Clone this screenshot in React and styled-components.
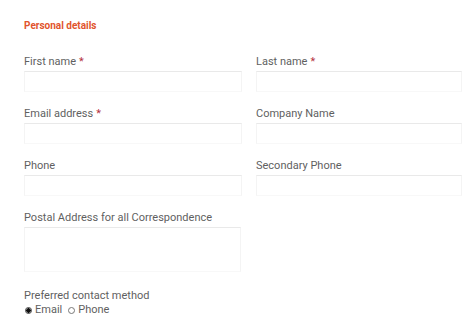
import React from "react";
import styled, { createGlobalStyle } from "styled-components";

const Global = createGlobalStyle`
  html, body { margin: 0; padding: 0; background: #fff; }
  body { font-family: Roboto, "Liberation Sans", Arial, sans-serif; }
  * { box-sizing: border-box; }
`;

const Form = styled.form`
  padding: 19px 12px 0 24px;
  width: 474px;
`;

const Title = styled.h2`
  margin: 0 0 21px;
  font-size: 10px;
  line-height: 14px;
  font-weight: 700;
  color: #e1542d;
`;

const Grid = styled.div`
  display: grid;
  grid-template-columns: 218px 206px;
  column-gap: 14px;
  row-gap: 14px;
`;

const Field = styled.div`
  display: flex;
  flex-direction: column;
  grid-column: ${(p) => (p.$wide ? "1 / 2" : "auto")};
`;

const Label = styled.label`
  font-size: 11px;
  line-height: 16px;
  color: #5f5f5f;
  margin-bottom: 1px;
`;

const Req = styled.span`
  color: #b5323f;
  margin-left: 3px;
`;

const Input = styled.input`
  height: 21px;
  width: 100%;
  border: 1px solid #f4f4f4;
  border-top-color: #e9e9e9;
  border-bottom-color: #f8f8f8;
  background: #fff;
  outline: none;
  padding: 0 6px;
  font: inherit;
  font-size: 11px;
`;

const TextArea = styled.textarea`
  height: 45px;
  width: 217px;
  border: 1px solid #f4f4f4;
  border-top-color: #e9e9e9;
  border-bottom-color: #f8f8f8;
  resize: none;
  outline: none;
  font: inherit;
  font-size: 11px;
`;

const Contact = styled.fieldset`
  border: 0;
  margin: 17px 0 0;
  padding: 0;
`;

const Legend = styled.div`
  font-size: 11px;
  line-height: 14px;
  color: #5f5f5f;
`;

const Options = styled.div`
  display: flex;
  align-items: center;
  gap: 6px;
  margin-left: 1px;
`;

const Option = styled.label`
  display: flex;
  align-items: center;
  gap: 3px;
  font-size: 11px;
  line-height: 14px;
  color: #5f5f5f;
`;

const Radio = styled.input`
  appearance: none;
  margin: 0;
  width: 7px;
  height: 7px;
  border-radius: 50%;
  border: 1px solid #777;
  background: #fff;
  &:checked {
    background: radial-gradient(circle, #111 0 2px, #fff 2.5px);
    border-color: #444;
  }
`;

const fields = [
  { label: "First name", req: true },
  { label: "Last name", req: true },
  { label: "Email address", req: true },
  { label: "Company Name" },
  { label: "Phone" },
  { label: "Secondary Phone" },
];

export default function App() {
  return (
    <>
      <Global />
      <Form>
        <Title>Personal details</Title>
        <Grid>
          {fields.map((f) => (
            <Field key={f.label}>
              <Label>
                {f.label}
                {f.req && <Req>*</Req>}
              </Label>
              <Input type="text" />
            </Field>
          ))}
          <Field $wide>
            <Label>Postal Address for all Correspondence</Label>
            <TextArea />
          </Field>
        </Grid>
        <Contact>
          <Legend>Preferred contact method</Legend>
          <Options>
            <Option>
              <Radio type="radio" name="contact" defaultChecked />
              Email
            </Option>
            <Option>
              <Radio type="radio" name="contact" />
              Phone
            </Option>
          </Options>
        </Contact>
      </Form>
    </>
  );
}
